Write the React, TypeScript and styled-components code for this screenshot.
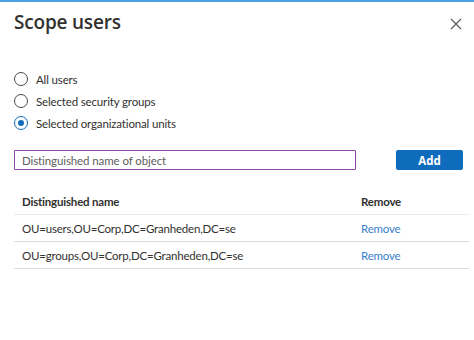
import { useState } from "react";
import styled, { createGlobalStyle } from "styled-components";

const GlobalStyle = createGlobalStyle`
  html, body { margin: 0; padding: 0; background: #ffffff; }
  body { font-family: Lato, "Open Sans", sans-serif; color: #323130; }
`;

const Panel = styled.div`
  width: 474px;
  height: 340px;
  box-sizing: border-box;
  border-top: 2px solid #4a9fe0;
  background: #ffffff;
  display: flex;
  flex-direction: column;
  padding: 0 6px 0 14px;
`;

const Header = styled.div`
  display: flex;
  align-items: center;
  justify-content: space-between;
  height: 40px;
`;

const Title = styled.h1`
  margin: 0;
  font-family: "Open Sans", sans-serif;
  font-size: 19px;
  font-weight: 600;
  color: #323130;
  letter-spacing: -0.2px;
`;

const CloseBtn = styled.button`
  background: none;
  border: none;
  padding: 0;
  width: 24px;
  height: 24px;
  display: flex;
  align-items: center;
  justify-content: center;
  cursor: pointer;
  margin-top: 4px;
`;

const RadioGroup = styled.div`
  display: flex;
  flex-direction: column;
  gap: 8px;
  margin-top: 30px;
`;

const RadioRow = styled.label`
  display: flex;
  align-items: center;
  gap: 8px;
  height: 14px;
  font-size: 11.5px;
  letter-spacing: -0.15px;
  color: #323130;
  cursor: pointer;
`;

const RadioCircle = styled.span<{ $checked: boolean }>`
  width: 14px;
  height: 14px;
  box-sizing: border-box;
  border-radius: 50%;
  border: 1px solid ${(p) => (p.$checked ? "#0f6cbd" : "#4a4a4a")};
  display: flex;
  align-items: center;
  justify-content: center;
  &::after {
    content: "";
    width: 6px;
    height: 6px;
    border-radius: 50%;
    background: ${(p) => (p.$checked ? "#0f6cbd" : "transparent")};
  }
`;

const AddRow = styled.div`
  display: flex;
  align-items: center;
  justify-content: space-between;
  margin-top: 20px;
  padding-right: 5px;
`;

const Input = styled.input`
  width: 342px;
  height: 20px;
  box-sizing: border-box;
  border: 1px solid #8c47a5;
  border-radius: 1px;
  padding: 0 7px;
  font-family: Lato, "Open Sans", sans-serif;
  font-size: 11.5px;
  letter-spacing: -0.1px;
  color: #323130;
  outline: none;
  &::placeholder { color: #605e5c; }
`;

const AddBtn = styled.button`
  width: 67px;
  height: 20px;
  border: none;
  border-radius: 2px;
  background: #0f6cbd;
  color: #ffffff;
  font-family: "Open Sans", sans-serif;
  font-size: 11.5px;
  font-weight: 700;
  cursor: pointer;
`;

const Table = styled.div`
  margin-top: 18px;
  width: 455px;
  display: flex;
  flex-direction: column;
`;

const Row = styled.div<{ $head?: boolean }>`
  display: grid;
  grid-template-columns: 1fr 108px;
  align-items: center;
  height: 26px;
  border-bottom: 1px solid ${(p) => (p.$head ? "#edebe9" : "#dcdcdc")};
  padding-left: 8px;
  font-size: 11.5px;
  letter-spacing: -0.2px;
  color: #323130;
  font-weight: ${(p) => (p.$head ? 700 : 400)};
`;

const RemoveLink = styled.a`
  color: #3a7fcf;
  font-weight: 400;
  text-decoration: none;
  cursor: pointer;
`;

const options = ["All users", "Selected security groups", "Selected organizational units"];

export default function App() {
  const [selected, setSelected] = useState(2);
  const [units, setUnits] = useState([
    "OU=users,OU=Corp,DC=Granheden,DC=se",
    "OU=groups,OU=Corp,DC=Granheden,DC=se",
  ]);
  const [dn, setDn] = useState("");

  return (
    <>
      <GlobalStyle />
      <Panel>
        <Header>
          <Title>Scope users</Title>
          <CloseBtn aria-label="Close">
            <svg width="12" height="12" viewBox="0 0 12 12">
              <path d="M1 1L11 11M11 1L1 11" stroke="#555" strokeWidth="1.1" />
            </svg>
          </CloseBtn>
        </Header>

        <RadioGroup>
          {options.map((o, i) => (
            <RadioRow key={o} onClick={() => setSelected(i)}>
              <RadioCircle $checked={selected === i} />
              {o}
            </RadioRow>
          ))}
        </RadioGroup>

        <AddRow>
          <Input
            value={dn}
            onChange={(e) => setDn(e.target.value)}
            placeholder="Distinguished name of object"
          />
          <AddBtn
            onClick={() => {
              if (!dn.trim()) return;
              setUnits([...units, dn.trim()]);
              setDn("");
            }}
          >
            Add
          </AddBtn>
        </AddRow>

        <Table>
          <Row $head>
            <span>Distinguished name</span>
            <span>Remove</span>
          </Row>
          {units.map((u, i) => (
            <Row key={u}>
              <span>{u}</span>
              <RemoveLink onClick={() => setUnits(units.filter((_, j) => j !== i))}>Remove</RemoveLink>
            </Row>
          ))}
        </Table>
      </Panel>
    </>
  );
}
